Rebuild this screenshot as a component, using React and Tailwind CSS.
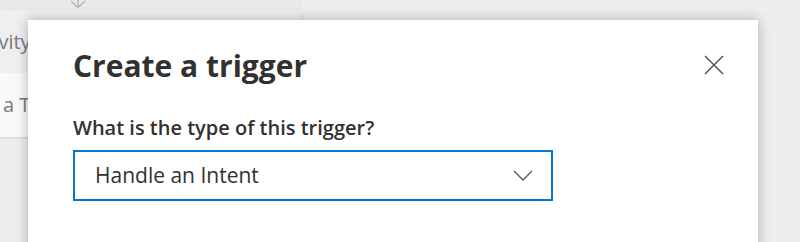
import React from "react";

const font = { fontFamily: '"Open Sans", "Noto Sans", sans-serif' };

const App = () => {
  return (
    <div
      className="relative w-[800px] h-[242px] overflow-hidden bg-[#eeeeee]"
      style={font}
    >
      {/* --- background canvas --- */}
      <div className="flex flex-col items-start">
        <div className="h-[10px] w-[302px] bg-[#e9e9e9] flex justify-center">
          <svg width="20" height="10" viewBox="0 0 20 10" className="ml-[-146px] mt-[-2px]">
            <path d="M10 0 V9 M3 3 L10 9.5 L17 3" stroke="#b4b4b4" strokeWidth="1.3" fill="none" />
          </svg>
        </div>
        <div className="w-[302px] rounded-tr-[3px] overflow-hidden shadow-[0_1px_3px_rgba(0,0,0,0.12)]">
          <div className="h-[63px] bg-[#efeef1] flex items-center">
            <span className="ml-[-36px] text-[20px] text-[#7a7a7a]">Activity</span>
          </div>
          <div className="h-[64px] bg-[#f9f9f9] flex items-center">
            <span className="ml-[3px] text-[20px] text-[#7a7a7a]">a To</span>
          </div>
        </div>
      </div>

      {/* --- dialog --- */}
      <div className="absolute left-[28px] top-[20px] w-[730px] h-[260px] bg-white shadow-[0_0_12px_rgba(0,0,0,0.28)]">
        <div className="flex items-start justify-between pl-[45px] pr-[34px] pt-[26px]">
          <h1 className="text-[30px] font-bold text-[#323130] leading-[40px]">Create a trigger</h1>
          <button className="mt-[9px] w-[20px] h-[20px] flex items-center justify-center">
            <svg width="20" height="20" viewBox="0 0 20 20">
              <path d="M1 1 L19 19 M19 1 L1 19" stroke="#4a4a4a" strokeWidth="1.4" fill="none" />
            </svg>
          </button>
        </div>
        <div className="pl-[45px] mt-[30px]">
          <label className="block text-[20px] font-semibold text-[#323130] leading-[24px]">
            What is the type of this trigger?
          </label>
          <div className="mt-[10px] w-[480px] h-[51px] border-2 border-[#0078d4] flex items-center justify-between pl-[20px] pr-[18px]">
            <span className="text-[21px] text-[#323130]">Handle an Intent</span>
            <svg width="20" height="11" viewBox="0 0 20 11">
              <path d="M1 1 L10 10 L19 1" stroke="#555" strokeWidth="1.3" fill="none" />
            </svg>
          </div>
        </div>
      </div>
    </div>
  );
};

export default App;
